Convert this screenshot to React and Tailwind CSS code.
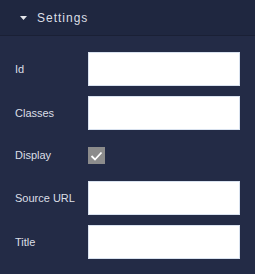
import React from 'react';

const fields = [
  { label: 'Id', type: 'text' },
  { label: 'Classes', type: 'text' },
  { label: 'Display', type: 'check' },
  { label: 'Source URL', type: 'text' },
  { label: 'Title', type: 'text' },
];

export default function App() {
  return (
    <div
      className="w-[255px] h-[274px] bg-[#232b46] overflow-hidden"
      style={{ fontFamily: '"Liberation Sans", Arial, sans-serif' }}
    >
      {/* Header */}
      <div className="h-[36px] flex items-center bg-[#1f2740] border-b border-[#1a2035] pl-[20px]">
        <svg width="7" height="4" viewBox="0 0 7 4" className="mr-[10px]">
          <path d="M0 0h7L3.5 4z" fill="#e5e7eb" />
        </svg>
        <span className="text-[12px] tracking-[1px] text-[#dcdfe6]">Settings</span>
      </div>

      {/* Fields */}
      <div className="flex flex-col gap-[10px] pt-[16px] pl-[15px]">
        {fields.map((f) => (
          <div
            key={f.label}
            className={`flex items-center ${f.type === 'check' ? 'h-[31px]' : 'h-[34px]'}`}
          >
            <label className="w-[73px] text-[11px] text-[#dcdfe6]">{f.label}</label>
            {f.type === 'check' ? (
              <div className="w-[17px] h-[17px] bg-[#8c8c8c] flex items-center justify-center">
                <svg width="13" height="10" viewBox="0 0 13 10">
                  <path
                    d="M1.5 5l3.5 3.5L11.5 1.5"
                    fill="none"
                    stroke="#ffffff"
                    strokeWidth="1.8"
                  />
                </svg>
              </div>
            ) : (
              <input
                type="text"
                className="w-[152px] h-[34px] bg-white border border-[#d9e2ef] outline-none"
              />
            )}
          </div>
        ))}
      </div>
    </div>
  );
}
